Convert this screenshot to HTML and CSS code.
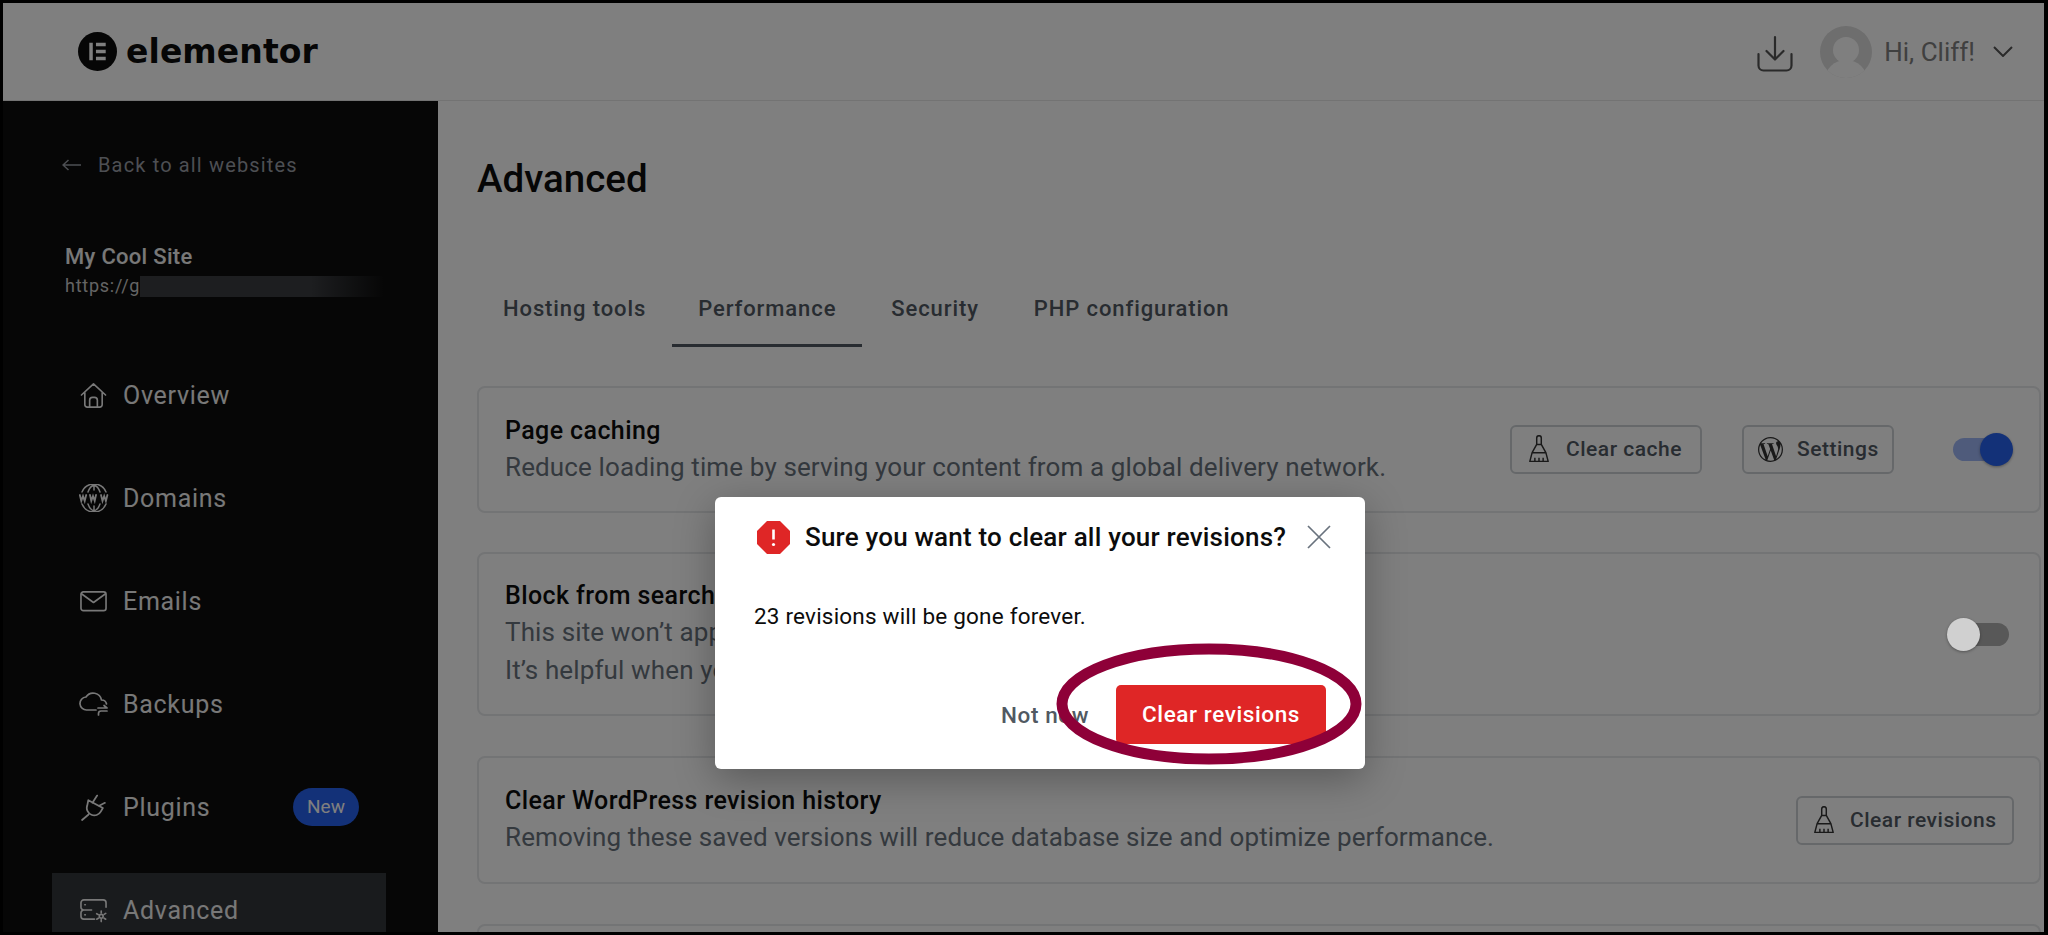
FILE: index.html
```html
<!DOCTYPE html>
<html lang="en">
<head>
<meta charset="utf-8">
<title>Advanced</title>
<link rel="stylesheet" href="styles.css">
</head>
<body>
<div class="frame">
  <header class="topbar">
    <div class="logo">
      <svg class="logo-mark" viewBox="0 0 38 38"><circle cx="19" cy="19" r="19" fill="#0c0c0c"/><path d="M11 10.500h3.400v17H11zM17.500 10.500h9.500v3.400h-9.500zM17.500 17.300h9.500v3.400h-9.500zM17.500 24.100h9.500v3.400h-9.500z" fill="#fff"/></svg>
      <span class="logo-text">elementor</span>
    </div>
    <div class="top-right">
      <svg class="dl-icon" viewBox="0 0 36 37" fill="none" stroke="#555" stroke-width="2.200" stroke-linecap="round" stroke-linejoin="round"><path d="M18 2v22M9.500 16l8.500 8.500 8.500-8.500M1.500 19v11.500a5 5 0 0 0 5 5h23a5 5 0 0 0 5-5V19"/></svg>
      <svg class="avatar" viewBox="0 0 52 52"><defs><clipPath id="av"><circle cx="26" cy="26" r="26"/></clipPath></defs><g clip-path="url(#av)"><rect width="52" height="52" fill="#dcdcdc"/><circle cx="26" cy="24" r="13" fill="#fff"/><ellipse cx="26" cy="54" rx="21" ry="20" fill="#fff"/></g></svg>
      <span class="greeting">Hi, Cliff!</span>
      <svg class="chev" viewBox="0 0 20 11" fill="none" stroke="#555" stroke-width="2"><path d="M1 1l9 9 9-9"/></svg>
    </div>
  </header>
  <div class="body-row">
    <aside class="sidebar">
      <div class="back"><svg class="back-arrow" viewBox="0 0 19 12" fill="none" stroke="#9a9ea6" stroke-width="1.500"><path d="M19 6H1M6.500 1L1 6l5.500 5"/></svg><span>Back to all websites</span></div>
      <div class="site-name">My Cool Site</div>
      <div class="site-url"><span>https://g</span><i class="blur-bar"></i></div>
      <nav class="nav">
        <div class="nav-item"><svg class="nav-icon" viewBox="0 0 28 28" fill="none" stroke="#f0f0f0" stroke-width="1.700" stroke-linejoin="round" stroke-linecap="round"><path d="M1.500 13.500L14 2l12.500 11.500M5 11v12.500A2.500 2.500 0 0 0 7.500 26h13a2.500 2.500 0 0 0 2.500-2.500V11M10 26v-7a3 3 0 0 1 3-3h2a3 3 0 0 1 3 3v7"/></svg><span>Overview</span></div>
        <div class="nav-item"><svg class="nav-icon is-wide" viewBox="0 0 30 28" fill="none" stroke="#f0f0f0" stroke-width="1.500" stroke-linecap="round"><path d="M3 8a13 13 0 0 1 24 0M3 20a13 13 0 0 0 24 0M15 1v5M15 22v5M9 8c1-3 3-6 6-7 3 1 5 4 6 7M9 20c1 3 3 6 6 7 3-1 5-4 6-7"/><path stroke-width="1.800" d="M.8 11l1.500 6 1.700-5 1.700 5 1.500-6M11 11l1.300 6 1.700-5 1.700 5 1.300-6M22 11l1.500 6 1.700-5 1.700 5 1.500-6"/></svg><span>Domains</span></div>
        <div class="nav-item"><svg class="nav-icon" viewBox="0 0 28 22" fill="none" stroke="#f0f0f0" stroke-width="1.700" stroke-linejoin="round"><rect x="1" y="1" width="26" height="19.500" rx="2.500"/><path d="M1.500 3l12.500 9 12.500-9"/></svg><span>Emails</span></div>
        <div class="nav-item"><svg class="nav-icon is-wide" viewBox="0 0 30 24" fill="none" stroke="#f0f0f0" stroke-width="1.700" stroke-linecap="round" stroke-linejoin="round"><path d="M17 18H8a6.500 6.500 0 0 1-1-13A8.500 8.500 0 0 1 22.500 8a5 5 0 0 1 5 4"/><path d="M19 16h9l-3-2.500M28 19h-6a2.500 2.500 0 0 0-2.500 2.500V23"/></svg><span>Backups</span></div>
        <div class="nav-item"><svg class="nav-icon" viewBox="0 0 26 26" fill="none" stroke="#f0f0f0" stroke-width="1.700" stroke-linecap="round" stroke-linejoin="round"><path d="M8 6l14 7.500-2 3.500a7 7 0 0 1-9 3 7 7 0 0 1-4-9zM2 25l6-5M12 8.500l4.500-7M18 11.500l6-3"/></svg><span>Plugins</span><b class="badge">New</b></div>
        <div class="nav-item is-active"><svg class="nav-icon" viewBox="0 0 28 24" fill="none" stroke="#f0f0f0" stroke-width="1.700" stroke-linecap="round"><path d="M12 11.500H4a3 3 0 0 1-3-3V4a3 3 0 0 1 3-3h20a3 3 0 0 1 3 3v4.500M12 11.500H4a3 3 0 0 0-3 3V18a3 3 0 0 0 3 3h11M5 6h.5M5 16.500h.5"/><circle cx="22" cy="18" r="2"/><path d="M22 12.500v2M22 21.500v2M17.300 15.300l1.700 1M25 20l1.700 1M17.300 21l1.700-1M25 16l1.700-1"/></svg><span>Advanced</span></div>
      </nav>
    </aside>
    <main class="content">
      <h1 class="page-title">Advanced</h1>
      <div class="tabs">
        <div class="tab">Hosting tools</div>
        <div class="tab is-current">Performance</div>
        <div class="tab">Security</div>
        <div class="tab">PHP configuration</div>
      </div>
      <section class="card card-one">
        <div class="card-text">
          <div class="card-title">Page caching</div>
          <div class="card-desc">Reduce loading time by serving your content from a global delivery network.</div>
        </div>
        <div class="card-actions">
          <div class="btn btn-cache"><svg class="broom" viewBox="0 0 24 30" fill="none" stroke="#333" stroke-width="1.600" stroke-linejoin="round"><path d="M9.500 10V3a2.500 2.500 0 0 1 5 0v7M9.500 10h5l5 9H4.500zM4.500 19L2 28.500h20L19.500 19M7.500 28.500v-4M12 28.500v-4M16.500 28.500v-4"/></svg><span>Clear cache</span></div>
          <div class="btn btn-settings"><svg class="wp" viewBox="0 0 24 24"><path fill="#333" d="M21.469 6.825c.84 1.537 1.318 3.3 1.318 5.175 0 3.979-2.156 7.456-5.363 9.325l3.295-9.527c.615-1.54.82-2.771.82-3.864 0-.405-.026-.78-.07-1.11m-7.981.105c.647-.03 1.232-.105 1.232-.105.582-.075.514-.93-.067-.899 0 0-1.755.135-2.88.135-1.064 0-2.85-.15-2.85-.15-.585-.03-.661.855-.075.885 0 0 .54.061 1.125.09l1.68 4.605-2.37 7.08L5.354 6.9c.649-.03 1.234-.1 1.234-.1.585-.075.516-.93-.065-.896 0 0-1.746.138-2.874.138-.2 0-.438-.008-.69-.015C4.911 3.15 8.235 1.215 12 1.215c2.809 0 5.365 1.072 7.286 2.833-.046-.003-.091-.009-.141-.009-1.06 0-1.812.923-1.812 1.914 0 .89.513 1.643 1.06 2.531.411.72.89 1.643.89 2.977 0 .915-.354 1.994-.821 3.479l-1.075 3.585-3.9-11.61.001.014zM12 22.784c-1.059 0-2.081-.153-3.048-.437l3.237-9.406 3.315 9.087c.024.053.05.101.078.149-1.12.393-2.325.609-3.582.609M1.211 12c0-1.564.336-3.05.935-4.39L7.29 21.709C3.694 19.96 1.212 16.271 1.211 12M12 0C5.385 0 0 5.385 0 12s5.385 12 12 12 12-5.385 12-12S18.615 0 12 0"/></svg><span>Settings</span></div>
          <div class="toggle is-on"><i class="knob"></i></div>
        </div>
      </section>
      <section class="card card-two">
        <div class="card-text">
          <div class="card-title">Block from search</div>
          <div class="card-desc">This site won’t appear</div>
          <div class="card-desc">It’s helpful when you</div>
        </div>
        <div class="toggle is-off"><i class="knob"></i></div>
      </section>
      <section class="card card-three">
        <div class="card-text">
          <div class="card-title">Clear WordPress revision history</div>
          <div class="card-desc">Removing these saved versions will reduce database size and optimize performance.</div>
        </div>
        <div class="btn btn-revisions"><svg class="broom" viewBox="0 0 24 30" fill="none" stroke="#333" stroke-width="1.600" stroke-linejoin="round"><path d="M9.500 10V3a2.500 2.500 0 0 1 5 0v7M9.500 10h5l5 9H4.500zM4.500 19L2 28.500h20L19.500 19M7.500 28.500v-4M12 28.500v-4M16.500 28.500v-4"/></svg><span>Clear revisions</span></div>
      </section>
      <section class="card card-four"></section>
    </main>
  </div>
  <div class="scrim"></div>
  <div class="modal">
    <div class="modal-head">
      <svg class="stop" viewBox="0 0 33 33"><path d="M10 0h13l10 10v13L23 33H10L0 23V10z" fill="#df2626"/><path d="M16.500 8.500v10" stroke="#fff" stroke-width="2.600"/><circle cx="16.500" cy="23.500" r="1.600" fill="#fff"/></svg>
      <span class="modal-title">Sure you want to clear all your revisions?</span>
      <svg class="close" viewBox="0 0 24 24" fill="none" stroke="#69727d" stroke-width="1.700"><path d="M1 1l22 22M23 1L1 23"/></svg>
    </div>
    <p class="modal-body">23 revisions will be gone forever.</p>
    <div class="modal-foot">
      <span class="not-now">Not now</span>
      <span class="danger">Clear revisions</span>
    </div>
    <svg class="ring" viewBox="0 0 306 122" fill="none"><ellipse cx="153" cy="61" rx="147" ry="55" stroke="#8e0038" stroke-width="11"/></svg>
  </div>
</div>
</body>
</html>
```
FILE: styles.css
```css
* { box-sizing: border-box; }
html, body { margin: 0; height: 100%; overflow: hidden; background: #000; }
body { font-family: Roboto, "Liberation Sans", sans-serif; }

.frame {
  position: relative;
  width: 2048px;
  height: 935px;
  border: solid #000;
  border-width: 3px 4px 3px 3px;
  background: #fff;
  overflow: hidden;
  display: flex;
  flex-direction: column;
}

.topbar {
  flex: 0 0 98px;
  display: flex;
  align-items: center;
  justify-content: space-between;
  padding: 0 31px 0 75px;
  background: #fff;
  border-bottom: 1px solid #e6e6e6;
}
.logo { display: flex; align-items: center; gap: 9px; }
.logo-mark { width: 39px; height: 39px; }
.logo-text {
  font-family: "DejaVu Sans", sans-serif;
  font-weight: 700;
  font-size: 33px;
  letter-spacing: .1px;
  color: #0c0c0c;
}
.top-right { display: flex; align-items: center; }
.dl-icon { width: 36px; height: 37px; margin-right: 27px; margin-top: 4px; }
.avatar { width: 52px; height: 52px; margin-right: 12px; }
.greeting { font-size: 26px; color: #808080; margin-right: 18px; }
.chev { width: 20px; height: 11px; }

.body-row { flex: 1; display: flex; min-height: 0; }
.sidebar {
  flex: 0 0 435px;
  background: #0c0c0c;
  padding: 50px 0 0 49px;
  color: #f0f0f0;
}
.back {
  display: flex;
  align-items: center;
  gap: 17px;
  padding-left: 10px;
  font-size: 20px;
  line-height: 28px;
  letter-spacing: 1.15px;
  color: #9a9ea6;
}
.back-arrow { width: 19px; height: 12px; }
.site-name {
  margin: 64px 0 0 13px;
  font-size: 22px;
  line-height: 28px;
  font-weight: 500;
  letter-spacing: .3px;
}
.site-url {
  margin: 2px 0 0 13px;
  display: flex;
  align-items: center;
  font-size: 18px;
  line-height: 26px;
  letter-spacing: .75px;
  color: #c8c8c8;
}
.blur-bar {
  display: block;
  width: 245px;
  height: 21px;
  background: linear-gradient(90deg, #3a3c40 0, #3a3c40 70%, #0c0c0c 100%);
}
.nav { margin-top: 59px; width: 334px; display: flex; flex-direction: column; gap: 29px; }
.nav-item {
  flex: 0 0 74px;
  display: flex;
  align-items: center;
  padding: 0 27px 0 28px;
  font-size: 25px;
  letter-spacing: .7px;
  color: #f0f0f0;
}
.nav-icon { width: 27px; height: 27px; margin-right: 16px; flex: none; }
.nav-icon.is-wide { width: 30px; height: 28px; margin: 0 14px 0 -1px; }
.nav-item.is-active { background: #33363a; }
.badge {
  margin-left: auto;
  width: 66px;
  height: 38px;
  border-radius: 19px;
  background: #2662f0;
  font-size: 19px;
  font-weight: 400;
  line-height: 38px;
  text-align: center;
  letter-spacing: 0;
  color: #fff;
}

.content { flex: 1; padding: 0 0 0 39px; min-width: 0; }
.page-title {
  margin: 54px 0 0 0;
  font-size: 38.500px;
  line-height: 48px;
  font-weight: 500;
  color: #0c0c0c;
}
.tabs { display: flex; margin-top: 76px; height: 67px; }
.tab {
  padding: 0 26px 0 26px;
  height: 68px;
  line-height: 60px;
  font-size: 22px;
  font-weight: 500;
  letter-spacing: .9px;
  color: #515962;
}
.tab.is-current { border-bottom: 3px solid #515962; }
.tab:nth-child(n+3) { margin-left: 3px; }
.card {
  margin: 0 3px 0 0;
  padding: 0 28px 0 26px;
  border: 2px solid #e6e8ea;
  border-radius: 8px;
  display: flex;
  align-items: center;
  justify-content: space-between;
}
.card-one { height: 127px; margin-top: 40px; }
.card-two { height: 164px; margin-top: 39px; padding-right: 30px; }
.card-three { height: 128px; margin-top: 40px; padding-right: 25px; }
.card-four { height: 60px; margin-top: 40px; }
.card-title { font-size: 25px; line-height: 34px; font-weight: 500; letter-spacing: .4px; color: #0c0c0c; }
.card-desc { font-size: 26px; line-height: 38px; letter-spacing: .13px; color: #69727d; white-space: nowrap; }
.card-actions { display: flex; align-items: center; }
.btn {
  height: 49px;
  display: flex;
  align-items: center;
  gap: 16px;
  padding-bottom: 1px;
  border: 2px solid #ccd0d4;
  border-radius: 6px;
  font-size: 21px;
  font-weight: 500;
  letter-spacing: .5px;
  color: #515962;
}
.btn-cache { width: 192px; padding-left: 16px; }
.btn-settings { width: 152px; padding-left: 14px; margin-left: 40px; gap: 14px; }
.btn-revisions { width: 218px; padding-left: 15px; gap: 15px; }
.broom { width: 22px; height: 28px; flex: none; }
.wp { width: 25px; height: 25px; flex: none; }
.toggle { position: relative; width: 58px; height: 23px; border-radius: 12px; }
.toggle.is-on { background: #9eb6f6; margin-left: 59px; }
.toggle.is-off { background: #b0b0b0; }
.knob {
  position: absolute;
  top: -5px;
  width: 33px;
  height: 33px;
  border-radius: 50%;
  box-shadow: 0 1px 3px rgba(0,0,0,.35);
}
.is-on .knob { right: -2px; background: #2662f0; }
.is-off .knob { left: -4px; background: #d0d0d0; z-index: 3; }

.scrim { position: absolute; inset: 0; background: rgba(0,0,0,.5); z-index: 2; }

.modal {
  position: absolute;
  left: 712px;
  top: 494px;
  width: 650px;
  height: 272px;
  z-index: 4;
  background: #fff;
  border-radius: 6px;
  box-shadow: 0 10px 40px rgba(0,0,0,.3);
  display: flex;
  flex-direction: column;
}
.modal-head { display: flex; align-items: center; height: 80px; padding: 0 0 0 42px; }
.stop { width: 33px; height: 33px; margin-right: 15px; flex: none; }
.modal-title { font-size: 26px; font-weight: 500; letter-spacing: .2px; color: #0c0c0c; white-space: nowrap; }
.close { width: 24px; height: 24px; margin-left: 21px; flex: none; }
.modal-body { margin: 24px 0 0 39px; font-size: 22.500px; line-height: 30px; color: #0c0c0c; letter-spacing: .2px; }
.modal-foot {
  position: absolute;
  right: 39px;
  top: 188px;
  display: flex;
  align-items: center;
}
.not-now { font-size: 22.500px; font-weight: 500; letter-spacing: .6px; color: #515962; margin-right: 27px; }
.danger {
  width: 210px;
  height: 59px;
  border-radius: 5px;
  background: #df2626;
  color: #fff;
  font-size: 22.500px;
  font-weight: 500;
  letter-spacing: .6px;
  line-height: 59px;
  text-align: center;
}
.ring { position: absolute; left: 341px; top: 146px; width: 306px; height: 122px; pointer-events: none; }
```
